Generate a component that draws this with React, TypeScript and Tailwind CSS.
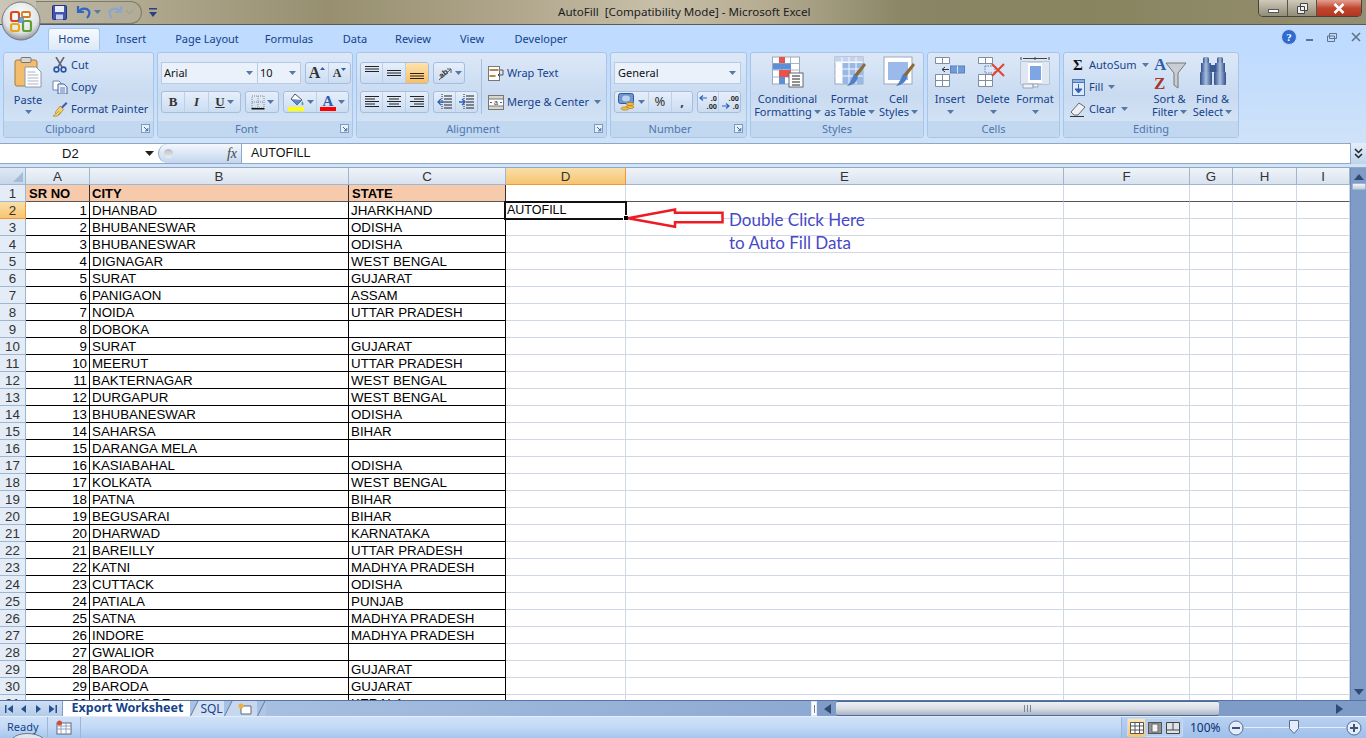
import type { ReactNode } from "react";

const ui = "font-['Noto_Sans','Open_Sans',sans-serif]";

const rows: [string, string][] = [
  ["DHANBAD", "JHARKHAND"],
  ["BHUBANESWAR", "ODISHA"],
  ["BHUBANESWAR", "ODISHA"],
  ["DIGNAGAR", "WEST BENGAL"],
  ["SURAT", "GUJARAT"],
  ["PANIGAON", "ASSAM"],
  ["NOIDA", "UTTAR PRADESH"],
  ["DOBOKA", ""],
  ["SURAT", "GUJARAT"],
  ["MEERUT", "UTTAR PRADESH"],
  ["BAKTERNAGAR", "WEST BENGAL"],
  ["DURGAPUR", "WEST BENGAL"],
  ["BHUBANESWAR", "ODISHA"],
  ["SAHARSA", "BIHAR"],
  ["DARANGA MELA", ""],
  ["KASIABAHAL", "ODISHA"],
  ["KOLKATA", "WEST BENGAL"],
  ["PATNA", "BIHAR"],
  ["BEGUSARAI", "BIHAR"],
  ["DHARWAD", "KARNATAKA"],
  ["BAREILLY", "UTTAR PRADESH"],
  ["KATNI", "MADHYA PRADESH"],
  ["CUTTACK", "ODISHA"],
  ["PATIALA", "PUNJAB"],
  ["SATNA", "MADHYA PRADESH"],
  ["INDORE", "MADHYA PRADESH"],
  ["GWALIOR", ""],
  ["BARODA", "GUJARAT"],
  ["BARODA", "GUJARAT"],
  ["KOZHIKODE", "KERALA"],
];

const columns = ["A", "B", "C", "D", "E", "F", "G", "H", "I"];
const gridCols = "grid-cols-[26px_64px_259px_157px_120px_438px_126px_43px_64px_53px]";
const tabs = [
  ["Home", "w-[52px]"],
  ["Insert", "w-[62px]"],
  ["Page Layout", "w-[90px]"],
  ["Formulas", "w-[74px]"],
  ["Data", "w-[58px]"],
  ["Review", "w-[58px]"],
  ["View", "w-[60px]"],
  ["Developer", "w-[78px]"],
];

function Caret({ className = "" }: { className?: string }) {
  return (
    <svg width="7" height="4" viewBox="0 0 7 4" className={`shrink-0 ${className}`}>
      <path d="M0 0h7L3.5 4z" fill="#5578a8" />
    </svg>
  );
}

function Lines({ widths, align = "left", top = 0 }: { widths: number[]; align?: string; top?: number }) {
  return (
    <svg width="16" height="14" viewBox="0 0 16 14">
      {widths.map((w, i) => {
        const x = align === "left" ? 1 : align === "right" ? 15 - w : 8 - w / 2;
        return <rect key={i} x={x} y={top + i * 2.5} width={w} height="1" fill="#222" />;
      })}
    </svg>
  );
}

function Launcher() {
  return (
    <svg width="9" height="9" viewBox="0 0 9 9" className="shrink-0">
      <rect x="0.5" y="0.5" width="8" height="8" fill="#e8f0fa" stroke="#7d9cc4" />
      <path d="M3 3l3.5 3.5M6.8 4v2.8H4" stroke="#44689a" fill="none" />
    </svg>
  );
}

function Group({ label, className, launcher, children }: { label: string; className: string; launcher?: boolean; children: ReactNode }) {
  return (
    <div className={`flex h-[86px] shrink-0 flex-col overflow-hidden rounded-[3px] border border-[#a9c5e6] bg-gradient-to-b from-[#dce8f8] via-[#c9dbf1] to-[#d9e7f7] ${className}`}>
      <div className="flex h-[68px] shrink-0">{children}</div>
      <div className={`relative flex h-[16px] items-center justify-center bg-[#c1d8f0] pb-[2px] text-[11px] leading-none text-[#4f76ad] ${launcher ? "pr-[17px]" : ""}`}>
        {label}
        {launcher && (
          <span className="absolute right-[3px] top-[3px] flex">
            <Launcher />
          </span>
        )}
      </div>
    </div>
  );
}

function BtnGroup({ className = "", children }: { className?: string; children: ReactNode }) {
  return (
    <div className={`flex h-[22px] shrink-0 divide-x divide-[#bdd0e8] overflow-hidden rounded-[3px] border border-[#a5bedd] bg-gradient-to-b from-[#e6effb] to-[#cbdcf2] ${className}`}>
      {children}
    </div>
  );
}

function Cell({ w, active, children }: { w: string; active?: boolean; children: ReactNode }) {
  return (
    <div className={`flex h-full items-center justify-center gap-[2px] ${w} ${active ? "bg-gradient-to-b from-[#fde3ad] to-[#fbbf5e]" : ""}`}>
      {children}
    </div>
  );
}

function BigButton({ w, lines, caretInline, children }: { w: string; lines: string[]; caretInline?: boolean; children: ReactNode }) {
  return (
    <div className={`flex shrink-0 flex-col items-center text-[11px] leading-[13px] text-[#15428b] ${w}`}>
      <div className="flex h-[36px] items-start justify-center pt-[3px]">{children}</div>
      <span className="mt-[3px] whitespace-nowrap">{lines[0]}</span>
      {caretInline ? (
        <span className="flex items-center gap-[2px] whitespace-nowrap">
          {lines[1]}
          <Caret />
        </span>
      ) : (
        <span className="flex h-[13px] items-center">
          <Caret />
        </span>
      )}
    </div>
  );
}

function SmallAction({ icon, label, caret }: { icon: ReactNode; label: string; caret?: boolean }) {
  return (
    <div className="flex h-[22px] items-center gap-[3px] whitespace-nowrap text-[11px] text-[#15428b]">
      <span className="flex w-[16px] shrink-0 justify-center">{icon}</span>
      {label}
      {caret && <Caret className="ml-[2px]" />}
    </div>
  );
}

function OfficeOrb() {
  return (
    <svg width="40" height="40" viewBox="0 0 40 40">
      <defs>
        <radialGradient id="orb" cx="50%" cy="35%" r="65%">
          <stop offset="0" stopColor="#ffffff" />
          <stop offset="0.7" stopColor="#dfe3e6" />
          <stop offset="1" stopColor="#8d9296" />
        </radialGradient>
      </defs>
      <circle cx="20" cy="20" r="19" fill="url(#orb)" stroke="#777" />
      <rect x="10" y="11" width="8" height="9" rx="2" fill="none" stroke="#d8491c" strokeWidth="2.2" />
      <rect x="21" y="11" width="8" height="5" rx="1" fill="none" stroke="#dc7a1c" strokeWidth="1.8" />
      <rect x="10" y="23" width="8" height="7" rx="2" fill="none" stroke="#eaa41c" strokeWidth="2.2" />
      <rect x="22" y="20" width="8" height="10" rx="2" fill="none" stroke="#5f9f35" strokeWidth="2.2" />
      <rect x="17" y="16" width="6" height="6" fill="#4a87c6" opacity="0.75" />
    </svg>
  );
}

function PasteIcon() {
  return (
    <svg width="28" height="32" viewBox="0 0 28 32">
      <rect x="1" y="3" width="22" height="26" rx="2" fill="#f3bd6e" stroke="#a67a3c" />
      <rect x="7" y="0.5" width="10" height="5" rx="1" fill="#d8d8d0" stroke="#777" />
      <path d="M11 10h11l5 5v15H11z" fill="#fff" stroke="#8b98a8" />
      <path d="M13.5 15h8M13.5 18h11M13.5 21h11M13.5 24h11M13.5 27h11" stroke="#a9b4c0" />
    </svg>
  );
}

function Scissors() {
  return (
    <svg width="14" height="16" viewBox="0 0 14 16">
      <path d="M3 0l6 10M11 0L5 10" stroke="#667" strokeWidth="1.6" />
      <circle cx="3.5" cy="12.5" r="2.4" fill="none" stroke="#2c55a5" strokeWidth="1.6" />
      <circle cx="10.5" cy="12.5" r="2.4" fill="none" stroke="#2c55a5" strokeWidth="1.6" />
    </svg>
  );
}

function CopyIcon() {
  return (
    <svg width="16" height="14" viewBox="0 0 16 14">
      <path d="M1 1h6l2 2v7H1z" fill="#fff" stroke="#7184a8" />
      <path d="M6 4h6l3 3v7H6z" fill="#eaf1fb" stroke="#40619c" />
      <path d="M8 8h5M8 10h5M8 12h5" stroke="#5d7fb8" />
    </svg>
  );
}

function Painter() {
  return (
    <svg width="16" height="16" viewBox="0 0 16 16">
      <path d="M9 6l5-5 1.5 1.5-5 5z" fill="#3f5fa8" />
      <path d="M8 5l3.5 3.5L7 14c-2 1.5-5 1.5-6 1 2-1 3-2.5 2.5-4z" fill="#f0d070" stroke="#a57f2c" strokeWidth="0.7" />
      <path d="M4 13l3-3M6 14l3-3" stroke="#a57f2c" strokeWidth="0.6" />
    </svg>
  );
}

function FillColor() {
  return (
    <svg width="18" height="18" viewBox="0 0 18 18">
      <path d="M8 1l7 6-5 5-6-6z" fill="#fff" stroke="#555" />
      <path d="M4 6l6 6 5-5z" fill="#5a8ac8" />
      <path d="M15 8c1.5 2 2 3 1 4s-2 0-1-4z" fill="#5a8ac8" />
      <rect x="1" y="14" width="16" height="4" fill="#ffff00" />
    </svg>
  );
}

function FontColor() {
  return (
    <svg width="16" height="18" viewBox="0 0 16 18">
      <text x="8" y="12.5" textAnchor="middle" fontFamily="Liberation Serif" fontWeight="bold" fontSize="15" fill="#2f5da8">A</text>
      <rect x="0" y="14" width="16" height="4" fill="#ff0000" />
    </svg>
  );
}

function BorderIcon() {
  return (
    <svg width="14" height="15" viewBox="0 0 14 15">
      <path d="M1 1h12v12H1zM7 1v12M1 7h12" fill="none" stroke="#888" strokeDasharray="1 1" />
      <rect x="0.5" y="13" width="13" height="1.5" fill="#111" />
    </svg>
  );
}

function Orientation() {
  return (
    <svg width="16" height="16" viewBox="0 0 16 16">
      <text x="0" y="11" fontFamily="Liberation Sans" fontWeight="bold" fontSize="8" fill="#333" transform="rotate(-40 5 8) translate(1 1)">ab</text>
      <path d="M2 15L14 4M14 4h-4M14 4v4" stroke="#555" fill="none" />
    </svg>
  );
}

function IndentIcon({ out }: { out?: boolean }) {
  return (
    <svg width="16" height="16" viewBox="0 0 16 16">
      <path d="M7 2h8M7 5h8M7 8h8M7 11h8M7 14h8" stroke="#222" />
      <path d="M5 0v16" stroke="#222" strokeDasharray="1 1" />
      {out ? <path d="M1 8h6M4 5L1 8l3 3" stroke="#2f62b8" fill="none" strokeWidth="1.3" /> : <path d="M0 8h5M3 5l3 3-3 3" stroke="#2f62b8" fill="none" strokeWidth="1.3" />}
    </svg>
  );
}

function WrapIcon() {
  return (
    <svg width="16" height="15" viewBox="0 0 16 15">
      <rect x="0.5" y="0.5" width="11" height="14" fill="#fff" stroke="#777" />
      <rect x="1.5" y="3" width="9" height="2" fill="#b88646" />
      <rect x="1.5" y="9" width="6" height="2" fill="#b88646" />
      <path d="M12 4h3v5h-5M12 7l-2 2 2 2" stroke="#555" fill="none" />
    </svg>
  );
}

function MergeIcon() {
  return (
    <svg width="16" height="15" viewBox="0 0 16 15">
      <rect x="0.5" y="0.5" width="15" height="14" fill="#d9d6cd" stroke="#777" />
      <rect x="0.5" y="4" width="15" height="7" fill="#fff" stroke="#777" />
      <text x="8" y="10" textAnchor="middle" fontSize="7" fontFamily="Liberation Sans" fill="#333">a</text>
      <path d="M2 7.5h2M12 7.5h2" stroke="#2f62b8" />
    </svg>
  );
}

function CurrencyIcon() {
  return (
    <svg width="18" height="18" viewBox="0 0 18 18">
      <rect x="0.5" y="0.5" width="15" height="10" rx="2" fill="#6d97d2" stroke="#35588f" />
      <ellipse cx="8" cy="5.5" rx="4" ry="3" fill="#bcd2ee" />
      <ellipse cx="12" cy="11" rx="4" ry="1.6" fill="#f2bd3c" stroke="#a8741b" strokeWidth="0.6" />
      <ellipse cx="12" cy="14" rx="4" ry="1.6" fill="#f2bd3c" stroke="#a8741b" strokeWidth="0.6" />
      <ellipse cx="7" cy="15.5" rx="4" ry="1.6" fill="#f2bd3c" stroke="#a8741b" strokeWidth="0.6" />
    </svg>
  );
}

function DecimalIcon({ more }: { more?: boolean }) {
  return (
    <svg width="18" height="16" viewBox="0 0 18 16">
      <text x="18" y="7" textAnchor="end" fontSize="7.5" fontWeight="bold" fontFamily="Liberation Sans" fill="#222">{more ? ".0" : ".00"}</text>
      <text x="18" y="15" textAnchor="end" fontSize="7.5" fontWeight="bold" fontFamily="Liberation Sans" fill="#222">{more ? ".00" : ".0"}</text>
      <path d={more ? "M1 4h7M4 1.500L1 4l3 2.500" : "M1 12h7M5 9.500L8 12l-3 2.500"} stroke="#2f62b8" fill="none" strokeWidth="1.2" />
    </svg>
  );
}

function CondFormat() {
  return (
    <svg width="32" height="32" viewBox="0 0 32 32">
      <rect x="0.5" y="1" width="27" height="27" fill="#fff" stroke="#9aa8ba" />
      <path d="M9.500 1v27M18.500 1v27M0.500 7.500h27M0.500 14h27M0.500 21h27" stroke="#a9b5c5" />
      <rect x="7" y="1" width="6" height="6" fill="#e9534a" />
      <rect x="1" y="7.500" width="18" height="6" fill="#5d8fd6" />
      <rect x="7" y="14" width="12" height="7" fill="#e9534a" />
      <rect x="7" y="21" width="6" height="7" fill="#5d8fd6" />
      <rect x="17" y="17" width="14" height="14" fill="#fff" stroke="#667" />
      <path d="M20 20h8M20 23h8M20 26h8M20 29h8" stroke="#222" />
    </svg>
  );
}

function Brush({ children }: { children: ReactNode }) {
  return (
    <svg width="32" height="32" viewBox="0 0 32 32">
      {children}
      <path d="M30 7l2 2-9 12-3-2z" fill="#8b6a37" />
      <path d="M20 18l4 3c-1 5-5 8-11 9 3-3 5-7 7-12z" fill="#4f7fc4" />
    </svg>
  );
}

function TableIcon() {
  return (
    <Brush>
      <rect x="1" y="1" width="28" height="27" fill="#fff" stroke="#9aa8ba" />
      <rect x="1" y="1" width="28" height="5" fill="#c3d4ec" />
      <rect x="8" y="7" width="21" height="21" fill="#9ab8e6" />
      <path d="M8 1v27M15 1v27M22 1v27M1 6h28M1 13h28M1 20h28" stroke="#f5f7fb" />
    </Brush>
  );
}

function StylesIcon() {
  return (
    <Brush>
      <rect x="1" y="1" width="28" height="27" fill="#fff" stroke="#9aa8ba" />
      <rect x="5" y="6" width="20" height="18" fill="#9cb9ec" />
    </Brush>
  );
}

function InsertIcon() {
  return (
    <svg width="30" height="32" viewBox="0 0 30 32">
      <path d="M0.500 1.500h14v6h-14zM7.500 1.500v6M0.500 18.500h14v12h-14zM7.500 18.500v12M0.500 24.500h14" fill="#fff" stroke="#7d8ea5" />
      <rect x="15.500" y="10" width="14" height="7" fill="#6f9bd8" stroke="#5a81b8" />
      <path d="M22.500 10v7" stroke="#dce8f8" />
      <path d="M7 13.500h7M10 11l-3 2.500 3 2.500" stroke="#333" fill="none" />
    </svg>
  );
}

function DeleteIcon() {
  return (
    <svg width="30" height="32" viewBox="0 0 30 32">
      <path d="M0.500 1.500h14v6h-14zM7.500 1.500v6M0.500 18.500h14v12h-14zM7.500 18.500v12M0.500 24.500h14" fill="#fff" stroke="#7d8ea5" />
      <rect x="7" y="10" width="10" height="7" fill="#dbe7f7" stroke="#5a81b8" strokeDasharray="1.500 1" />
      <path d="M14 8l12 12M26 8L14 20" stroke="#e2452e" strokeWidth="2" />
    </svg>
  );
}

function FormatIcon() {
  return (
    <svg width="30" height="34" viewBox="0 0 30 34">
      <path d="M1 1v3M29 1v3M3 2.500h24M15 1v3" stroke="#444" />
      <rect x="1" y="6" width="28" height="22" fill="#fff" stroke="#9aa8ba" />
      <rect x="1" y="6" width="7" height="22" fill="#dfe7f3" />
      <rect x="22" y="6" width="7" height="22" fill="#dfe7f3" />
      <rect x="10" y="10" width="11" height="14" fill="#7ea6e4" />
      <path d="M3 28h10v4H3zM13 28h5v3h-5z" fill="#eef2f8" stroke="#9aa8ba" />
    </svg>
  );
}

function SortIcon() {
  return (
    <svg width="34" height="36" viewBox="0 0 34 36">
      <text x="1" y="14" fontFamily="Liberation Serif" fontWeight="bold" fontSize="17" fill="#2f5da8">A</text>
      <text x="1" y="33" fontFamily="Liberation Serif" fontWeight="bold" fontSize="17" fill="#a8342a">Z</text>
      <path d="M13 7h20l-8 10v15l-4-3V17z" fill="#c9ced5" stroke="#777" />
    </svg>
  );
}

function Binoculars() {
  return (
    <svg width="28" height="32" viewBox="0 0 28 32">
      <defs>
        <linearGradient id="bino" x1="0" x2="1">
          <stop offset="0" stopColor="#304f88" />
          <stop offset="0.5" stopColor="#a8bde0" />
          <stop offset="1" stopColor="#314f86" />
        </linearGradient>
      </defs>
      <rect x="4" y="1" width="6" height="7" rx="2" fill="url(#bino)" />
      <rect x="18" y="1" width="6" height="7" rx="2" fill="url(#bino)" />
      <rect x="2" y="7" width="10" height="10" fill="url(#bino)" />
      <rect x="16" y="7" width="10" height="10" fill="url(#bino)" />
      <rect x="1" y="16" width="12" height="13" rx="1" fill="url(#bino)" />
      <rect x="15" y="16" width="12" height="13" rx="1" fill="url(#bino)" />
      <rect x="12" y="9" width="4" height="7" fill="#3a5a94" />
    </svg>
  );
}

function FillDown() {
  return (
    <svg width="13" height="17" viewBox="0 0 13 17">
      <rect x="0.500" y="0.500" width="12" height="16" fill="#dfe9f8" stroke="#4f77b5" />
      <rect x="0.500" y="0.500" width="12" height="3" fill="#8fb0e2" stroke="#4f77b5" />
      <path d="M6.500 5v8M3 10l3.500 4 3.500-4z" stroke="#2f62b8" fill="#2f62b8" />
    </svg>
  );
}

function Eraser() {
  return (
    <svg width="16" height="15" viewBox="0 0 16 15">
      <path d="M9 1l6 4-7 8H4L1 10z" fill="#eef0f3" stroke="#667" />
      <path d="M0 14.500h14" stroke="#333" />
    </svg>
  );
}

function SheetArrow({ d }: { d: string }) {
  return (
    <svg width="10" height="10" viewBox="0 0 10 10">
      <path d={d} fill="#25518f" />
    </svg>
  );
}

function TabSlant({ fill }: { fill: string }) {
  return (
    <svg width="9" height="16" viewBox="0 0 9 16" className="shrink-0">
      <path d="M0 16L8 0h1v16z" fill={fill} />
      <path d="M0 16L8 0" stroke="#5d7ca8" fill="none" />
    </svg>
  );
}

function ViewIcon({ kind }: { kind: string }) {
  return (
    <div className={`flex h-[18px] w-[18px] items-center justify-center ${kind === "normal" ? "bg-gradient-to-b from-[#fde7b7] to-[#f9c46b]" : ""}`}>
      <svg width="14" height="12" viewBox="0 0 14 12">
        {kind === "normal" && <path d="M.5.500h13v11H.500zM.500 4h13M.500 8h13M5 .500v11M9.500.500v11" fill="#fff" stroke="#555" />}
        {kind === "layout" && (
          <>
            <rect x="0.500" y="0.500" width="13" height="11" fill="#8f959c" stroke="#555" />
            <rect x="4" y="2" width="6" height="8" fill="#f4f4f4" stroke="#666" />
          </>
        )}
        {kind === "break" && <path d="M.500.500h13v11H.500zM7 .500V8M.500 8H13" fill="#dfe2e6" stroke="#444" />}
      </svg>
    </div>
  );
}

function Ribbon() {
  return (
    <div className={`flex h-[93px] shrink-0 gap-[3px] bg-gradient-to-b from-[#bfdbff] to-[#cfe2f8] pl-[3px] pt-[2px] ${ui}`}>
      <Group label="Clipboard" className="w-[151px]" launcher>
        <div className="flex w-[48px] flex-col items-center pt-[4px] text-[11px] leading-[13px] text-[#15428b]">
          <PasteIcon />
          <span className="mt-[4px]">Paste</span>
          <Caret className="mt-[4px]" />
        </div>
        <div className="flex flex-col pt-[1px]">
          <SmallAction icon={<Scissors />} label="Cut" />
          <SmallAction icon={<CopyIcon />} label="Copy" />
          <SmallAction icon={<Painter />} label="Format Painter" />
        </div>
      </Group>

      <Group label="Font" className="w-[196px]" launcher>
        <div className="flex flex-col gap-[7px] pl-[3px] pt-[9px]">
          <div className="flex h-[22px] gap-[4px]">
            <div className="flex">
              <div className="flex h-[22px] w-[97px] items-center justify-between border border-[#b5cbe6] bg-[#eaf1fb] pl-[2px] pr-[4px] text-[11px] text-[#111]">
                Arial <Caret />
              </div>
              <div className="flex h-[22px] w-[43px] items-center justify-between border border-l-0 border-[#b5cbe6] bg-[#eaf1fb] pl-[2px] pr-[4px] text-[11px] text-[#111]">
                10 <Caret />
              </div>
            </div>
            <BtnGroup>
              <Cell w="w-[23px]">
                <span className="font-['Liberation_Serif',serif] text-[16px] font-bold leading-none text-[#333]">A</span>
                <svg width="5" height="3" viewBox="0 0 5 3" className="mb-[9px] ml-[-2px]"><path d="M2.500 0L5 3H0z" fill="#2f5da8" /></svg>
              </Cell>
              <Cell w="w-[21px]">
                <span className="font-['Liberation_Serif',serif] text-[12px] font-bold leading-none text-[#333]">A</span>
                <svg width="5" height="3" viewBox="0 0 5 3" className="mb-[8px] ml-[-2px]"><path d="M2.500 3L5 0H0z" fill="#2f5da8" /></svg>
              </Cell>
            </BtnGroup>
          </div>
          <div className="flex gap-[4px]">
            <BtnGroup className="w-[80px]">
              <Cell w="w-[23px]"><span className="font-['Liberation_Serif',serif] text-[13px] font-bold text-[#333]">B</span></Cell>
              <Cell w="w-[24px]"><span className="font-['Liberation_Serif',serif] text-[13px] font-bold italic text-[#333]">I</span></Cell>
              <Cell w="w-[31px]">
                <span className="font-['Liberation_Serif',serif] text-[13px] font-bold text-[#333] underline">U</span>
                <Caret />
              </Cell>
            </BtnGroup>
            <BtnGroup className="w-[34px]">
              <Cell w="w-full"><BorderIcon /><Caret /></Cell>
            </BtnGroup>
            <BtnGroup className="w-[66px]">
              <Cell w="w-[33px]"><FillColor /><Caret /></Cell>
              <Cell w="w-[31px]"><FontColor /><Caret /></Cell>
            </BtnGroup>
          </div>
        </div>
      </Group>

      <Group label="Alignment" className="w-[251px]" launcher>
        <div className="flex flex-col gap-[7px] pl-[3px] pt-[9px]">
          <div className="flex gap-[4px]">
            <BtnGroup className="w-[69px]">
              <Cell w="w-[23px]"><Lines widths={[14, 14, 14]} align="center" /></Cell>
              <Cell w="w-[23px]"><Lines widths={[14, 14, 14]} align="center" top={4} /></Cell>
              <Cell w="w-[23px]" active><Lines widths={[14, 14, 14]} align="center" top={7} /></Cell>
            </BtnGroup>
            <BtnGroup className="w-[32px]">
              <Cell w="w-full"><Orientation /><Caret /></Cell>
            </BtnGroup>
          </div>
          <div className="flex gap-[4px]">
            <BtnGroup className="w-[69px]">
              <Cell w="w-[23px]"><Lines widths={[14, 10, 14, 10, 14]} top={1} /></Cell>
              <Cell w="w-[23px]"><Lines widths={[14, 10, 14, 10, 14]} align="center" top={1} /></Cell>
              <Cell w="w-[23px]"><Lines widths={[14, 10, 14, 10, 14]} align="right" top={1} /></Cell>
            </BtnGroup>
            <BtnGroup className="w-[45px]">
              <Cell w="w-[23px]"><IndentIcon out /></Cell>
              <Cell w="w-[22px]"><IndentIcon /></Cell>
            </BtnGroup>
          </div>
        </div>
        <div className="ml-[3px] mt-[6px] h-[55px] w-px bg-[#a7bfdc]" />
        <div className="flex flex-col gap-[7px] pl-[6px] pt-[9px]">
          <SmallAction icon={<WrapIcon />} label="Wrap Text" />
          <SmallAction icon={<MergeIcon />} label="Merge & Center" caret />
        </div>
      </Group>

      <Group label="Number" className="w-[137px]" launcher>
        <div className="flex flex-col gap-[7px] pl-[3px] pt-[9px]">
          <div className="flex h-[22px] w-[127px] items-center justify-between border border-[#b5cbe6] bg-[#eaf1fb] pl-[3px] pr-[4px] text-[11px] text-[#111]">
            General <Caret />
          </div>
          <div className="flex gap-[4px]">
            <BtnGroup className="w-[79px]">
              <Cell w="w-[34px]"><CurrencyIcon /><Caret /></Cell>
              <Cell w="w-[23px]"><span className="text-[13px] text-[#333]">%</span></Cell>
              <Cell w="w-[20px]"><span className="text-[13px] font-bold text-[#333]">,</span></Cell>
            </BtnGroup>
            <BtnGroup className="w-[44px]">
              <Cell w="w-[22px]"><DecimalIcon more /></Cell>
              <Cell w="w-[22px]"><DecimalIcon /></Cell>
            </BtnGroup>
          </div>
        </div>
      </Group>

      <Group label="Styles" className="w-[174px]">
        <BigButton w="w-[73px]" lines={["Conditional", "Formatting"]} caretInline><CondFormat /></BigButton>
        <BigButton w="w-[51px]" lines={["Format", "as Table"]} caretInline><TableIcon /></BigButton>
        <BigButton w="w-[47px]" lines={["Cell", "Styles"]} caretInline><StylesIcon /></BigButton>
      </Group>

      <Group label="Cells" className="w-[133px]">
        <BigButton w="w-[44px]" lines={["Insert"]}><InsertIcon /></BigButton>
        <BigButton w="w-[42px]" lines={["Delete"]}><DeleteIcon /></BigButton>
        <BigButton w="w-[42px]" lines={["Format"]}><FormatIcon /></BigButton>
      </Group>

      <Group label="Editing" className="w-[176px]">
        <div className="flex w-[84px] flex-col pl-[6px] pt-[1px]">
          <SmallAction icon={<span className="font-['Liberation_Serif',serif] text-[15px] font-bold leading-none text-[#111]">Σ</span>} label="AutoSum" caret />
          <SmallAction icon={<FillDown />} label="Fill" caret />
          <SmallAction icon={<Eraser />} label="Clear" caret />
        </div>
        <BigButton w="w-[43px]" lines={["Sort &", "Filter"]} caretInline><SortIcon /></BigButton>
        <BigButton w="w-[43px]" lines={["Find &", "Select"]} caretInline><Binoculars /></BigButton>
      </Group>
    </div>
  );
}

function TitleBar() {
  return (
    <div className={`relative flex h-[25px] shrink-0 items-center border-b border-[#5b5a50] bg-[linear-gradient(90deg,#cbc6b6_0%,#aca58a_12%,#978f70_24%,#b1a78d_38%,#c8bfa8_48%,#b5ac92_56%,#8a8666_66%,#88845f_80%,#958e70_100%)] ${ui}`}>
      <div className="ml-[36px] flex h-[23px] w-[106px] items-center rounded-r-[12px] border border-l-0 border-[#7f7b6c] bg-[#b3ad9b]/60 pl-[16px]">
        <svg width="15" height="15" viewBox="0 0 15 15">
          <rect x="0.500" y="0.500" width="14" height="14" rx="1" fill="#3f55b0" stroke="#253478" />
          <rect x="3" y="1" width="9" height="6" fill="#e8edf8" />
          <rect x="4" y="9.500" width="7" height="5" fill="#c7d0e6" />
        </svg>
        <svg width="15" height="14" viewBox="0 0 15 14" className="ml-[9px]">
          <path d="M2 1v6h6M3 6.500C5 3 11 2.500 13 6c1 2.500 0 5-2 7" fill="none" stroke="#2f66c4" strokeWidth="2.200" />
        </svg>
        <Caret className="ml-[3px]" />
        <svg width="15" height="14" viewBox="0 0 15 14" className="ml-[7px]">
          <path d="M13 1v6H7M12 6.500C10 3 4 2.500 2 6c-1 2.500 0 5 2 7" fill="none" stroke="#8ca5c8" strokeWidth="2.200" />
        </svg>
        <svg width="7" height="4" viewBox="0 0 7 4" className="ml-[3px]"><path d="M0 0l3.500 4L7 0" stroke="#999" fill="none" /></svg>
      </div>
      <svg width="8" height="9" viewBox="0 0 8 9" className="ml-[7px]">
        <path d="M0 0h8v1.500H0zM0 4h8L4 9z" fill="#2c3f80" />
      </svg>
      <span className="absolute left-[558px] top-[4px] whitespace-pre text-[11.6px] leading-[16px] text-[#1c1c1c]">AutoFill  [Compatibility Mode] - Microsoft Excel</span>
      <div className="absolute right-[4px] top-0 flex h-[17px] overflow-hidden rounded-b-[5px] border border-t-0 border-[#45443c]">
        <div className="flex w-[28px] items-center justify-center bg-gradient-to-b from-[#cfcabb] to-[#918c78]">
          <span className="mt-[6px] h-[4px] w-[11px] border border-[#555] bg-white" />
        </div>
        <div className="flex w-[30px] items-center justify-center border-x border-[#55534a] bg-gradient-to-b from-[#cfcabb] to-[#918c78]">
          <svg width="11" height="11" viewBox="0 0 11 11"><path d="M3.500.500h7v7h-7zM.500 3.500h7v7h-7z" fill="#eee" stroke="#444" /></svg>
        </div>
        <div className="flex w-[44px] items-center justify-center bg-gradient-to-b from-[#e2a090] via-[#c2452f] to-[#b23620]">
          <svg width="12" height="11" viewBox="0 0 12 11"><path d="M1.500 1l9 9M10.500 1l-9 9" stroke="#fff" strokeWidth="2.500" /></svg>
        </div>
      </div>
    </div>
  );
}

function TabRow() {
  return (
    <div className={`flex h-[25px] shrink-0 items-end bg-[#bfdbff] pl-[48px] text-[11px] text-[#15428b] ${ui}`}>
      {tabs.map(([name, width]) => (
        <div
          key={name}
          className={`flex h-[22px] items-center justify-center ${width} ${
            name === "Home" ? "rounded-t-[3px] border border-b-0 border-[#a3c4e8] bg-gradient-to-b from-[#f7fafe] to-[#dce9f9]" : ""
          }`}
        >
          {name}
        </div>
      ))}
      <div className="ml-auto flex h-[22px] items-center self-start pr-[5px] pt-[2px]">
        <svg width="16" height="16" viewBox="0 0 16 16">
          <circle cx="8" cy="8" r="7.500" fill="#2f6bd0" stroke="#c4d6f0" />
          <text x="8" y="12" textAnchor="middle" fontFamily="Liberation Serif" fontWeight="bold" fontSize="11" fill="#fff">?</text>
        </svg>
        <span className="ml-[9px] mt-[6px] h-[2px] w-[7px] bg-[#5f7488]" />
        <svg width="10" height="9" viewBox="0 0 10 9" className="ml-[14px]"><path d="M2.500.500h7v5h-7zM.500 3h7v5.500h-7z" fill="#bfdbff" stroke="#5f7488" /></svg>
        <svg width="10" height="10" viewBox="0 0 10 10" className="ml-[14px]"><path d="M1 1l8 8M9 1L1 9" stroke="#5f7488" strokeWidth="1.600" /></svg>
      </div>
    </div>
  );
}

function FormulaBar() {
  return (
    <div className="flex h-[25px] shrink-0 flex-col bg-[#d3e3f6] font-['Liberation_Sans',sans-serif] text-[13px] text-[#111]">
      <div className="flex h-[21px] items-center border-y border-[#8fa8c8] bg-white">
        <div className="flex h-full w-[158px] items-center pl-[62px]">
          D2
          <svg width="9" height="5" viewBox="0 0 9 5" className="ml-[66px]"><path d="M0 0h9L4.500 5z" fill="#222" /></svg>
        </div>
        <div className="flex h-full w-[84px] items-center justify-between rounded-l-[10px] border-x border-[#8fa8c8] bg-gradient-to-b from-[#f4f8fd] to-[#c3d6ee] pl-[5px] pr-[4px]">
          <span className="h-[9px] w-[9px] rounded-full bg-gradient-to-b from-[#b6bcc4] to-[#eef1f5]" />
          <span className="font-['Liberation_Serif',serif] text-[14px] italic text-[#444]">fx</span>
        </div>
        <span className="ml-[9px] text-[12.5px]">AUTOFILL</span>
        <div className="ml-auto flex h-[21px] w-[16px] items-center justify-center border-l border-[#8fa8c8] bg-gradient-to-b from-[#e4eefa] to-[#bfd3ec]">
          <svg width="9" height="11" viewBox="0 0 9 11"><path d="M1 1l3.500 3.500L8 1M1 6l3.500 3.500L8 6" stroke="#222" strokeWidth="1.500" fill="none" /></svg>
        </div>
      </div>
      <div className="mt-[3px] h-px bg-[#8fa8c8]" />
    </div>
  );
}

function Sheet() {
  return (
    <div className="relative min-h-0 flex-1 overflow-hidden bg-white font-['Liberation_Sans',sans-serif] text-[13.33px] leading-[16px] text-black">
      <div className="flex h-full">
        <div className="min-w-0 flex-1 overflow-hidden">
          <div className={`grid w-[1350px] auto-rows-[17px] ${gridCols}`}>
            <div className="flex items-end justify-end border-b border-r border-[#9eb6ce] bg-gradient-to-b from-[#dfe8f3] to-[#c6d7ea] p-[2px]">
              <span className="h-0 w-0 border-b-[10px] border-l-[10px] border-b-[#a6bcd6] border-l-transparent" />
            </div>
            {columns.map((c) => (
              <div
                key={c}
                className={`flex items-center justify-center border-b border-r pt-px text-[#333] ${
                  c === "D"
                    ? "border-[#f29536] bg-gradient-to-b from-[#f9dfa9] to-[#f6c56e]"
                    : "border-[#9eb6ce] bg-gradient-to-b from-[#f0f4f9] to-[#d8e2ef]"
                }`}
              >
                {c}
              </div>
            ))}
            <div className="flex items-center justify-center border-b border-r border-[#9eb6ce] bg-[#e4ecf7] pt-px text-[#333]">1</div>
            {["SR NO", "CITY", "STATE"].map((h) => (
              <div key={h} className={`flex items-center border-b border-r border-b-[#555] border-r-[#333] bg-[#f7caac] pt-px text-[13px] font-bold ${h === "CITY" ? "px-[2px]" : "px-[3px]"}`}>
                {h}
              </div>
            ))}
            {columns.slice(3).map((c) => (
              <div key={c} className="border-b border-r border-b-[#555] border-r-[#d0d7e5]" />
            ))}
            {rows.map(([city, state], i) => (
              <div key={i} className="contents">
                <div
                  className={`flex items-center justify-center border-b border-r pt-px text-[#333] ${
                    i === 0 ? "border-[#f29536] bg-gradient-to-b from-[#f9dfa9] to-[#f6c56e]" : "border-[#9eb6ce] bg-[#e4ecf7]"
                  }`}
                >
                  {i + 2}
                </div>
                <div className="flex items-center justify-end border-b border-r border-black px-[2px] pt-px">{i + 1}</div>
                <div className="flex items-center border-b border-r border-black px-[2px] pt-px">{city}</div>
                <div className="flex items-center border-b border-r border-black px-[2px] pt-px">{state}</div>
                {columns.slice(3).map((c) => (
                  <div key={c} className="border-b border-r border-[#d0d7e5]" />
                ))}
              </div>
            ))}
          </div>
        </div>
        <div className="flex w-[16px] shrink-0 flex-col items-center border-l border-[#6d8bb8] bg-[#7f9cc9]">
          <svg width="10" height="6" viewBox="0 0 10 6" className="mt-[6px]"><path d="M5 0l5 6H0z" fill="#304a70" /></svg>
          <div className="mt-[3px] h-[7px] w-[14px] rounded-[1px] border border-[#9fb4d0] bg-gradient-to-b from-[#f3f5f8] to-[#c4cedb]" />
          <svg width="10" height="6" viewBox="0 0 10 6" className="mb-[5px] mt-auto"><path d="M5 6l5-6H0z" fill="#304a70" /></svg>
        </div>
      </div>
      <div className="absolute left-[504px] top-[33px] h-[19px] w-[123px] border-2 border-[#111] pl-px text-[12.5px] leading-[15px]">
        AUTOFILL
      </div>
      <span className="absolute left-[623px] top-[47px] h-[6px] w-[6px] border border-white bg-black" />
      <svg width="100" height="24" viewBox="0 0 100 24" className="absolute left-[626px] top-[40px]">
        <path d="M2 10.300L49 1.500v3.200H96.500v9.600H49v4.400z" fill="#fff" stroke="#ed1c24" strokeWidth="2.500" />
      </svg>
      <div className="absolute left-[729px] top-[40px] font-['Lato',sans-serif] text-[17px] leading-[23px] text-[#4848c8]">
        Double Click Here
        <br />
        to Auto Fill Data
      </div>
    </div>
  );
}

function SheetTabs() {
  return (
    <div className={`flex h-[16px] shrink-0 items-stretch border-t border-[#5573a3] bg-[#7f9cc9] ${ui}`}>
      <div className="flex w-[811px] items-stretch bg-gradient-to-r from-[#b3cae7] to-[#8ea9d2]">
        <div className="flex w-[63px] items-center justify-around border-r border-[#7f9cc9] bg-gradient-to-b from-[#cfdff4] to-[#b4cbe8] px-[2px]">
          <SheetArrow d="M1 1h1.500v8H1zM9 1v8L3.500 5z" />
          <SheetArrow d="M7 1v8L2 5z" />
          <SheetArrow d="M3 1v8l5-4z" />
          <SheetArrow d="M1 1v8l5.500-4zM7.500 1H9v8H7.500z" />
        </div>
        <div className="flex w-[127px] items-center justify-center bg-white pl-[2px] text-[12.5px] font-bold leading-none text-[#15428b]">
          Export Worksheet
        </div>
        <TabSlant fill="#d3e1f3" />
        <div className="flex w-[25px] items-center justify-center bg-[#d3e1f3] text-[12px] leading-none text-[#15428b]">SQL</div>
        <TabSlant fill="#c6d7ee" />
        <div className="flex w-[24px] items-center justify-center bg-[#c6d7ee]">
          <svg width="14" height="12" viewBox="0 0 14 12">
            <path d="M3 3h10v8H3z" fill="#fff" stroke="#667" />
            <circle cx="3" cy="3" r="2.500" fill="#eeb23c" />
          </svg>
        </div>
        <TabSlant fill="#b0c6e4" />
      </div>
      <div className="flex w-[6px] items-center justify-center border border-[#dfe7f2] bg-white">
        <span className="h-[8px] w-px bg-[#6d7f98]" />
      </div>
      <div className="flex min-w-0 flex-1 items-center">
        <svg width="8" height="10" viewBox="0 0 8 10" className="ml-[6px] shrink-0"><path d="M8 0v10L1 5z" fill="#304a70" /></svg>
        <div className="ml-[5px] flex h-[15px] w-[383px] items-center justify-center rounded-[2px] border-y border-[#4a6a9e] bg-gradient-to-b from-[#eef1f5] via-[#d9dee6] to-[#aab4c2]">
          <span className="h-[7px] w-[7px] border-x border-[#7b8794] [background:linear-gradient(90deg,transparent_2px,#7b8794_2px,#7b8794_3px,transparent_3px)]" />
        </div>
        <svg width="8" height="10" viewBox="0 0 8 10" className="ml-auto mr-[22px] shrink-0"><path d="M0 0v10l7-5z" fill="#304a70" /></svg>
      </div>
    </div>
  );
}

function StatusBar() {
  return (
    <div className={`relative flex h-[22px] shrink-0 items-center overflow-hidden border-t border-[#e2eefc] bg-gradient-to-b from-[#cfe1f8] via-[#c2d9f5] to-[#a6c6ee] text-[11px] text-[#15428b] ${ui}`}>
      <span className="w-[47px] pl-[7px]">Ready</span>
      <svg width="30" height="6" viewBox="0 0 30 6" className="absolute bottom-0 left-[13px]">
        <path d="M0 6C6 0 22 0 30 6" fill="#dfe5ee" stroke="#6d7785" />
      </svg>
      <div className="h-full w-px bg-[#9ab6da]" />
      <div className="flex w-[32px] justify-center">
        <svg width="16" height="15" viewBox="0 0 16 15">
          <rect x="1" y="3" width="14" height="11" fill="#fff" stroke="#667" />
          <path d="M1 6h14M1 9h14M5 3v11M10 3v11" stroke="#8ea3bf" />
          <circle cx="3.500" cy="3" r="2.500" fill="#d8492f" />
        </svg>
      </div>
      <div className="h-full w-px bg-[#9ab6da]" />
      <div className="ml-auto flex h-full w-[245px] items-center border-l border-[#9ab6da] bg-gradient-to-b from-[#b9d1f1] to-[#9fc0ea] pl-[5px]">
        <div className="flex h-[19px] w-[56px] items-center gap-[1px] rounded-[2px] border border-[#c9dcf4] bg-[#b8d0ee]">
          <ViewIcon kind="normal" />
          <ViewIcon kind="layout" />
          <ViewIcon kind="break" />
        </div>
        <span className="ml-[7px] w-[33px] text-[12px] leading-none text-[#0f2f72]">100%</span>
        <svg width="16" height="16" viewBox="0 0 16 16" className="ml-[5px]">
          <circle cx="8" cy="8" r="7" fill="#e3ecf8" stroke="#546f96" />
          <path d="M4 8h8" stroke="#3b5578" strokeWidth="2" />
        </svg>
        <div className="relative h-px w-[102px] bg-[#e6eefa]">
          <svg width="10" height="14" viewBox="0 0 10 14" className="absolute left-[45px] top-[-7px]">
            <path d="M.500.500h9v8l-4.500 5-4.500-5z" fill="#e3ecf8" stroke="#546f96" />
          </svg>
        </div>
        <svg width="16" height="16" viewBox="0 0 16 16">
          <circle cx="8" cy="8" r="7" fill="#e3ecf8" stroke="#546f96" />
          <path d="M4 8h8M8 4v8" stroke="#3b5578" strokeWidth="2" />
        </svg>
      </div>
    </div>
  );
}

export default function App() {
  return (
    <div className="relative flex h-[738px] w-[1366px] flex-col overflow-hidden bg-white">
      <TitleBar />
      <TabRow />
      <Ribbon />
      <FormulaBar />
      <Sheet />
      <SheetTabs />
      <StatusBar />
      <div className="absolute left-[1px] top-[1px]">
        <OfficeOrb />
      </div>
    </div>
  );
}
